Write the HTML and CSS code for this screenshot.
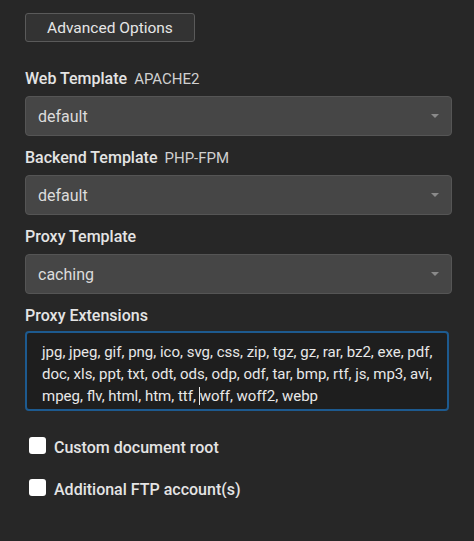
FILE: index.html
```html
<!DOCTYPE html>
<html>
<head>
<meta charset="utf-8">
<link rel="stylesheet" href="styles.css">
</head>
<body>
<div class="page">
  <button class="btn">Advanced Options</button>

  <div class="group">
    <label class="label"><span class="lbl-main">Web Template</span><span class="lbl-sub">APACHE2</span></label>
    <div class="select"><span>default</span><span class="arrow"></span></div>
  </div>

  <div class="group">
    <label class="label"><span class="lbl-main">Backend Template</span><span class="lbl-sub">PHP-FPM</span></label>
    <div class="select"><span>default</span><span class="arrow"></span></div>
  </div>

  <div class="group">
    <label class="label"><span class="lbl-main">Proxy Template</span></label>
    <div class="select"><span>caching</span><span class="arrow"></span></div>
  </div>

  <div class="group">
    <label class="label ext-label"><span class="lbl-main">Proxy Extensions</span></label>
    <div class="textarea">jpg, jpeg, gif, png, ico, svg, css, zip, tgz, gz, rar, bz2, exe, pdf,<br>doc, xls, ppt, txt, odt, ods, odp, odf, tar, bmp, rtf, js, mp3, avi,<br>mpeg, flv, html, htm, ttf, <span class="caret">woff</span>, woff2, webp</div>
  </div>

  <div class="checks">
    <div class="check"><span class="box"></span><span class="check-label">Custom document root</span></div>
    <div class="check"><span class="box"></span><span class="check-label">Additional FTP account(s)</span></div>
  </div>
</div>
</body>
</html>
```

FILE: styles.css
```css
html, body {
  margin: 0;
  padding: 0;
  background: #272727;
}
body {
  font-family: Roboto, "Noto Sans", sans-serif;
  color: #e2e2e2;
}
.page {
  padding: 13px 22px 0 25px;
  display: flex;
  flex-direction: column;
}
.btn {
  align-self: flex-start;
  width: 170px;
  height: 29px;
  background: #333333;
  border: 1px solid #5a5a5a;
  border-radius: 3px;
  color: #e6e6e6;
  font-family: inherit;
  font-size: 15.5px;
  padding: 0;
  margin-bottom: 26px;
}
.group {
  display: flex;
  flex-direction: column;
  margin-bottom: 11px;
}
.label {
  display: flex;
  align-items: baseline;
  height: 22px;
  line-height: 22px;
  margin-bottom: 6px;
}
.ext-label {
  margin-bottom: 4px;
}
.lbl-main {
  font-size: 16px;
  font-weight: 500;
  color: #e4e4e4;
}
.lbl-sub {
  font-size: 15px;
  color: #d0d0d0;
  margin-left: 7px;
}
.select {
  height: 40px;
  box-sizing: border-box;
  background: #464646;
  border: 1px solid #555555;
  border-radius: 4px;
  display: flex;
  align-items: center;
  justify-content: space-between;
  padding: 0 12px 0 12px;
  font-size: 16px;
  color: #dcdcdc;
}
.arrow {
  width: 0;
  height: 0;
  border-left: 4px solid transparent;
  border-right: 4px solid transparent;
  border-top: 4px solid #8a8a8a;
}
.textarea {
  width: 424px;
  height: 80px;
  box-sizing: border-box;
  background: #1e1e1e;
  border: 2px solid #1d5a8f;
  border-radius: 4px;
  padding: 8px 6px 0 15px;
  font-size: 15px;
  line-height: 22px;
  color: #e8e8e8;
  white-space: nowrap;
  overflow: hidden;
}
.caret {
  border-left: 1px solid #e8e8e8;
  margin-left: -1px;
}
.checks {
  display: flex;
  flex-direction: column;
  gap: 24px;
  margin-top: 16px;
  padding-left: 4px;
}
.check {
  display: flex;
  align-items: center;
  height: 18px;
}
.box {
  width: 17px;
  height: 17px;
  background: #ffffff;
  border-radius: 3px;
  margin-right: 8px;
  margin-top: -4px;
}
.check-label {
  font-size: 16px;
  font-weight: 500;
  color: #e4e4e4;
}
```
